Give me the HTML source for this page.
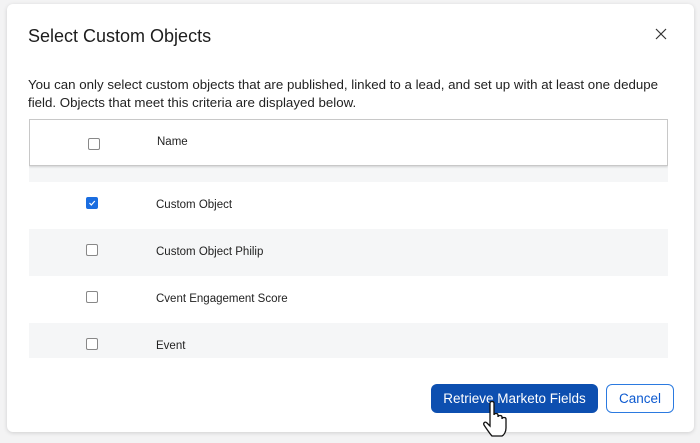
<!DOCTYPE html>
<html><head><style>
body{margin:0;width:700px;height:443px;background:#f3f3f4;font-family:"Liberation Sans",sans-serif;position:relative;overflow:hidden}
.dlg{position:absolute;left:7px;top:4px;width:687px;height:428px;background:#fff;border-radius:6px;box-shadow:0 1px 4px rgba(0,0,0,.15)}
.t{position:absolute;left:21px;top:22px;font-size:18px;color:#1d1d1d}
.x{position:absolute;left:648px;top:24px}
.p{position:absolute;left:21px;top:72px;width:650px;font-size:13.3px;line-height:18px;color:#222}
.tbl{position:absolute;left:22px;top:115px;width:639px;height:239px;overflow:hidden}
.hd{height:45px;border:1px solid #c8c8c8;position:relative;box-shadow:0 1px 2px rgba(0,0,0,.15)}
.row{height:47px;position:relative}
.g{background:#f5f6f7}
.cb{position:absolute;left:57px;width:10px;height:10px;border:1px solid #888;border-radius:2px;background:#fff}
.cb.on{background:#1a6de0;border-color:#1a6de0}
.lb{position:absolute;left:127px;font-size:11.5px;color:#222}
.b1{position:absolute;left:424px;top:380px;width:167px;height:29px;background:#0d4fb0;border-radius:6px;color:#fff;font-size:13.5px;text-align:center;line-height:29px}
.b2{position:absolute;left:599px;top:380px;width:66px;height:27px;border:1px solid #2b7ae0;border-radius:6px;color:#0d5ad0;font-size:13.5px;text-align:center;line-height:27px}
</style></head><body>
<div class="dlg">
<div class="t">Select Custom Objects</div>
<svg class="x" width="12" height="12" viewBox="0 0 12 12"><path d="M1 1L11 11M11 1L1 11" stroke="#333" stroke-width="1.2"/></svg>
<div class="p">You can only select custom objects that are published, linked to a lead, and set up with at least one dedupe field. Objects that meet this criteria are displayed below.</div>
<div class="tbl">
<div class="hd"><div class="cb" style="top:18px;left:58px"></div><div class="lb" style="top:16px;left:127px">Name</div></div>
<div class="g" style="height:16px"></div>
<div class="row"><div class="cb on" style="top:15px"><svg width="10" height="10" style="position:absolute;left:0;top:0"><path d="M2.5 5L4.3 7L7.8 3" stroke="#fff" stroke-width="1.2" fill="none"/></svg></div><div class="lb" style="top:17px">Custom Object</div></div>
<div class="row g"><div class="cb" style="top:15px"></div><div class="lb" style="top:17px">Custom Object Philip</div></div>
<div class="row"><div class="cb" style="top:15px"></div><div class="lb" style="top:17px">Cvent Engagement Score</div></div>
<div class="row g"><div class="cb" style="top:15px"></div><div class="lb" style="top:17px">Event</div></div>
</div>
<div class="b1">Retrieve Marketo Fields</div>
<div class="b2">Cancel</div>
</div>
<svg style="position:absolute;left:482px;top:400px" width="32" height="38" viewBox="0 0 32 38"><path d="M8 3c0-2 4-2 4 0v12c0-2 4-2 4 0v2c0-2 4-2 4 0v2c0-2 4-2 4 0v9c0 4-2 7-4 8h-10c-2-2-6-8-8-11-1-2 1-4 3-2l3 3z" fill="#fff" stroke="#111" stroke-width="1.3"/></svg>
</body></html>
